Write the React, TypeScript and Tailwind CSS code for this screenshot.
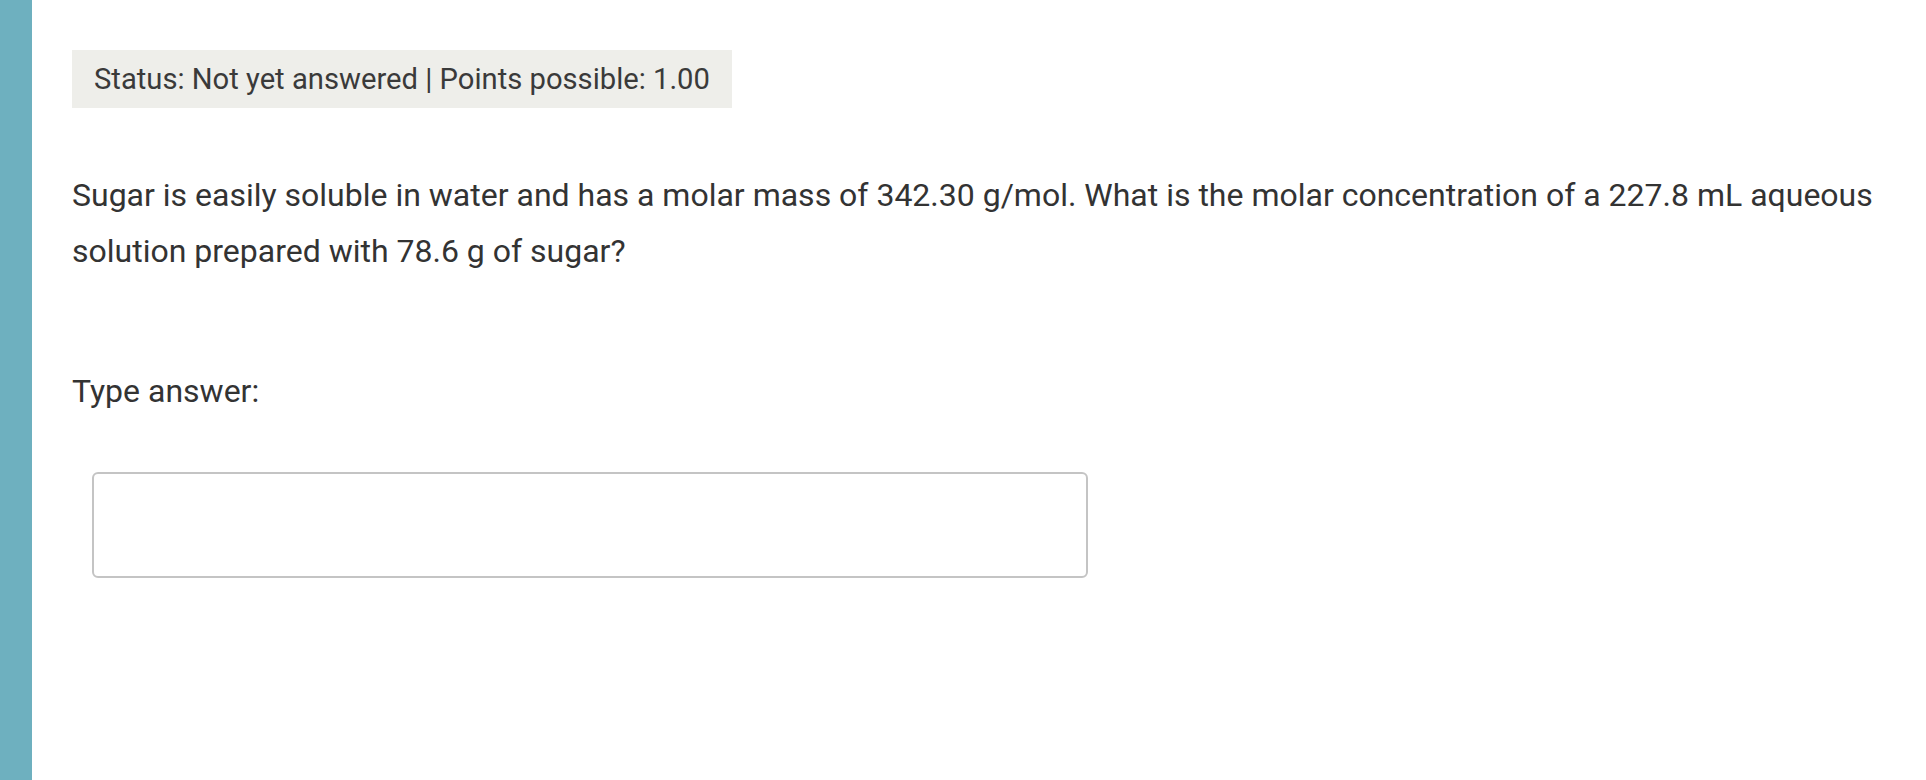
export default function App() {
  return (
    <div className="flex h-[780px] w-full bg-white font-['Roboto',sans-serif] text-[#333333]">
      <div className="w-[32px] shrink-0 bg-[#6eb0bf]" />
      <div className="flex-1 pl-[40px] pr-[40px]">
        <div className="mt-[50px] inline-block bg-[#eeeeea] px-[22px] text-[29.2px] leading-[58px] text-[#3a3a3a]">
          Status: Not yet answered | Points possible: 1.00
        </div>

        <p className="mt-[59px] text-[32px] leading-[56px]">
          Sugar is easily soluble in water and has a molar mass of 342.30 g/mol. What is the molar concentration of a 227.8 mL aqueous solution prepared with 78.6 g of sugar?
        </p>

        <p className="mt-[84px] text-[32px] leading-[56px]">Type answer:</p>

        <div className="mt-[53px] pl-[20px]">
          <input
            type="text"
            className="block h-[106px] w-[996px] rounded-[6px] border-2 border-[#c4c4c4] bg-white px-3 text-[24px] outline-none"
          />
        </div>
      </div>
    </div>
  );
}
